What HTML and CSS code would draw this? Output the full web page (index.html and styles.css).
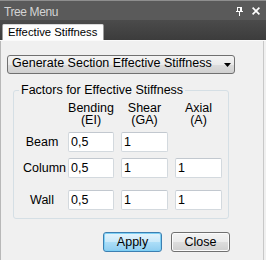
FILE: index.html
```html
<!DOCTYPE html>
<html>
<head>
<meta charset="utf-8">
<link rel="stylesheet" href="styles.css">
</head>
<body>
<div class="window">
  <div class="titlebar">
    <span class="title">Tree Menu</span>
    <span class="title-icons">
      <svg class="pin" width="7" height="9" viewBox="0 0 7 9" shape-rendering="crispEdges">
        <rect x="1" y="0" width="4" height="1" fill="#fff"/>
        <rect x="1" y="0" width="1" height="4" fill="#fff"/>
        <rect x="4" y="0" width="2" height="4" fill="#fff"/>
        <rect x="0" y="4" width="7" height="1" fill="#fff"/>
        <rect x="3" y="5" width="1" height="4" fill="#fff"/>
      </svg>
      <svg class="close-x" width="8" height="8" viewBox="0 0 8 8">
        <path d="M0.6 0.6 L7.4 7.4 M7.4 0.6 L0.6 7.4" stroke="#fff" stroke-width="1.7" fill="none"/>
      </svg>
    </span>
  </div>
  <div class="tabstrip">
    <div class="tab">Effective Stiffness</div>
  </div>
  <div class="page">
    <div class="combo">
      <span class="combo-text">Generate Section Effective Stiffness</span>
      <svg class="arrow" width="7" height="4" viewBox="0 0 7 4"><path d="M0 0 H7 L3.5 4 Z" fill="#000"/></svg>
    </div>
    <div class="group">
      <div class="group-title">Factors for Effective Stiffness</div>
      <div class="grid">
        <div></div>
        <div class="head"><div>Bending</div><div>(EI)</div></div>
        <div class="head"><div>Shear</div><div>(GA)</div></div>
        <div class="head"><div>Axial</div><div>(A)</div></div>

        <div class="label">Beam</div>
        <input class="field" value="0,5">
        <input class="field" value="1">
        <div></div>

        <div class="label">Column</div>
        <input class="field" value="0,5">
        <input class="field" value="1">
        <input class="field" value="1">

        <div class="label wall">Wall</div>
        <input class="field wall" value="0,5">
        <input class="field wall" value="1">
        <input class="field wall" value="1">
      </div>
    </div>
    <div class="actions">
      <button class="btn primary">Apply</button>
      <button class="btn">Close</button>
    </div>
  </div>
</div>
</body>
</html>
```
FILE: styles.css
```css
html, body {
  margin: 0;
  padding: 0;
}
body {
  width: 266px;
  height: 260px;
  overflow: hidden;
  background: #f0f0f0;
  font-family: "Liberation Sans", Arial, sans-serif;
  font-size: 12.5px;
  color: #000;
}
.window {
  width: 266px;
  height: 260px;
  display: flex;
  flex-direction: column;
}
.titlebar {
  box-sizing: border-box;
  height: 20px;
  border-top: 1px solid #8e8e8e;
  background: #5a5a5a;
  display: flex;
  align-items: flex-start;
  justify-content: space-between;
  padding: 4px 6px 0 4px;
}
.title {
  color: #d4d4d4;
  font-size: 12px;
  line-height: 14px;
  letter-spacing: -0.4px;
}
.title-icons {
  display: flex;
  align-items: flex-start;
  gap: 9px;
  margin-top: 2px;
}
.pin, .close-x {
  display: block;
}
.tabstrip {
  box-sizing: border-box;
  height: 21px;
  background: linear-gradient(#4b4b4b, #3c3c3c);
  border-bottom: 1px solid #fafafa;
  padding: 4px 0 0 2px;
  display: flex;
  align-items: flex-start;
}
.tab {
  box-sizing: border-box;
  width: 102px;
  height: 16px;
  background: #fdfdfd;
  border: 1px solid #9c9c9c;
  border-top-color: #d8d8d8;
  border-bottom: none;
  border-radius: 2px 2px 0 0;
  padding: 0 5px;
  font-size: 11.3px;
  line-height: 15px;
  white-space: nowrap;
}
.page {
  box-sizing: border-box;
  width: 264px;
  flex: 1;
  background: #f0f0f0;
  border-left: 1px solid #b8b8b8;
  border-right: 1px solid #c8c8c8;
  display: flex;
  flex-direction: column;
  align-items: flex-start;
}
.combo {
  box-sizing: border-box;
  width: 228px;
  height: 19px;
  margin: 14px 0 0 6px;
  border: 1px solid #707070;
  border-radius: 3px;
  background: linear-gradient(#f4f4f4 0%, #eaeaea 50%, #dcdcdc 51%, #d0d0d0 100%);
  display: flex;
  align-items: center;
  justify-content: space-between;
  padding: 0 3px 0 4px;
}
.combo-text {
  line-height: 15px;
  padding-bottom: 2px;
  white-space: nowrap;
}
.arrow {
  display: block;
}
.group {
  box-sizing: border-box;
  width: 216px;
  margin: 16px 0 0 12px;
  border: 1px solid #d5dfe5;
  border-radius: 3px;
  padding-bottom: 8px;
}
.group-title {
  width: max-content;
  margin: -8px 0 0 5px;
  padding: 0 2px;
  line-height: 15px;
  background: #f0f0f0;
}
.grid {
  display: grid;
  grid-template-columns: 47px 46px 47px 47px;
  column-gap: 7px;
  row-gap: 6px;
  margin-top: 5px;
  align-items: center;
}
.head {
  text-align: center;
  line-height: 11.5px;
}
.label {
  text-align: center;
  padding-left: 9px;
  line-height: 15px;
}
.field {
  box-sizing: border-box;
  width: 100%;
  height: 20px;
  margin: 0;
  border: 1px solid #d3d9de;
  border-top-color: #c2c8cf;
  border-radius: 2px;
  background: #fff;
  padding: 0 0 0 2px;
  font-family: "Liberation Sans", Arial, sans-serif;
  font-size: 12.5px;
  color: #000;
  outline: none;
}
.wall {
  margin-top: 6px;
}
.actions {
  box-sizing: border-box;
  width: 262px;
  margin-top: 13px;
  padding-right: 33px;
  display: flex;
  justify-content: flex-end;
  gap: 9px;
}
.btn {
  box-sizing: border-box;
  width: 59px;
  height: 20px;
  margin: 0;
  padding: 0;
  border: 1px solid #707070;
  border-radius: 3px;
  background: linear-gradient(#f3f3f3 0%, #ebebeb 50%, #dddddd 51%, #cfcfcf 100%);
  box-shadow: inset 0 0 0 1px #fbfbfb;
  font-family: "Liberation Sans", Arial, sans-serif;
  font-size: 12.5px;
  color: #000;
  line-height: 17px;
}
.btn.primary {
  border-color: #3c7fb1;
  background: linear-gradient(#e5f4fc 0%, #c9e9fa 50%, #addef8 51%, #8fcdf0 100%);
  box-shadow: inset 0 0 0 1px #7ed0f5;
}
```
